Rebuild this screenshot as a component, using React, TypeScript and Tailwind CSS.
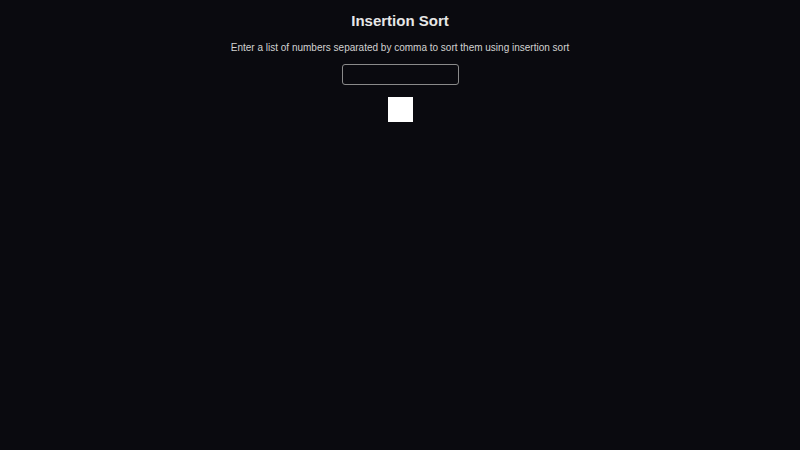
export default function App() {
  return (
    <div className="min-h-[450px] w-full bg-[#0a0a0f] flex flex-col items-center font-['Liberation_Sans',Arial,sans-serif]">
      <h1 className="mt-[12px] text-[15px] leading-[18px] font-bold text-[#e6e6e6]">Insertion Sort</h1>
      <p className="mt-[12px] text-[10px] leading-[12px] text-[#d2d2d2]">
        Enter a list of numbers separated by comma to sort them using insertion sort
      </p>
      <input
        type="text"
        className="mt-[10px] w-[117px] h-[21px] rounded-[3px] border border-[#8a8a8a] bg-transparent outline-none"
      />
      <button className="mt-[12px] w-[25px] h-[25px] bg-white"></button>
    </div>
  );
}
